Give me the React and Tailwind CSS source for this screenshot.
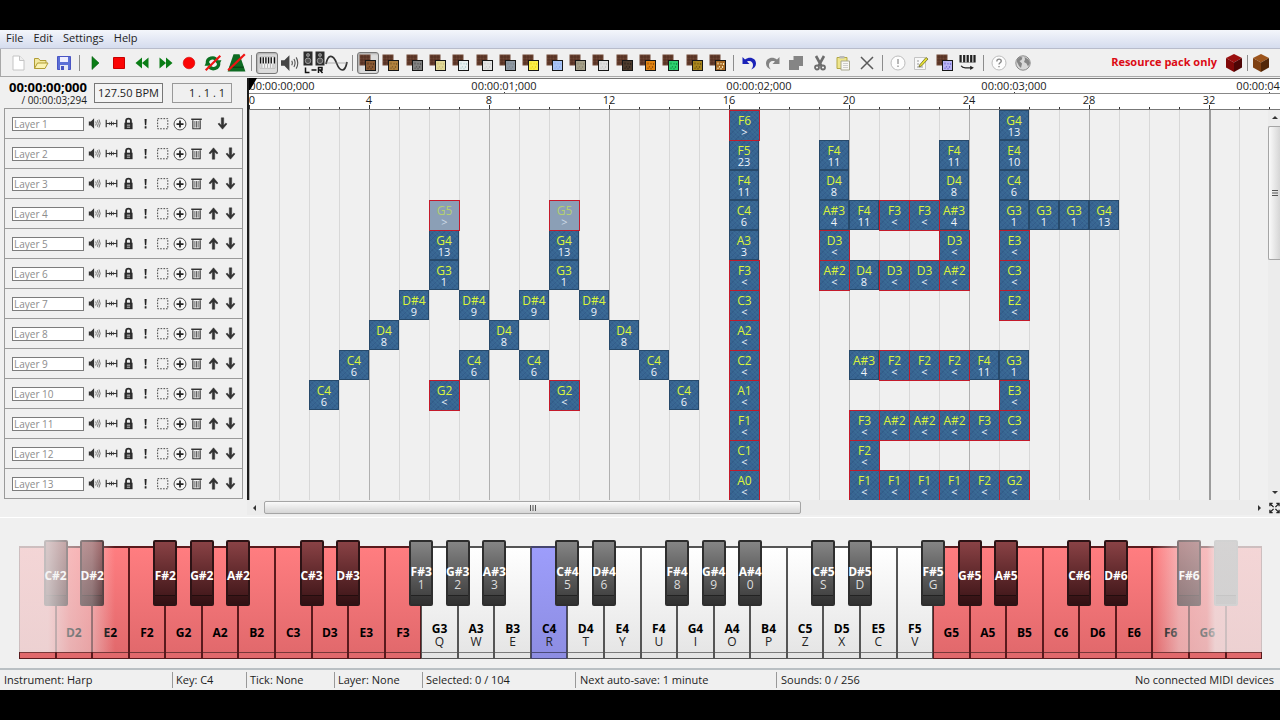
import React from "react";

/* ---------- data ---------- */

const SONG = [
  "16 F6 >|25 G4 13",
  "16 F5 23|19 F4 11|23 F4 11|25 E4 10",
  "16 F4 11|19 D4 8|23 D4 8|25 C4 6",
  "6 G5 > locked|10 G5 > locked|16 C4 6|19 A#3 4|20 F4 11|21 F3 <|22 F3 <|23 A#3 4|25 G3 1|26 G3 1|27 G3 1|28 G4 13",
  "6 G4 13|10 G4 13|16 A3 3|19 D3 <|23 D3 <|25 E3 <",
  "6 G3 1|10 G3 1|16 F3 <|19 A#2 <|20 D4 8|21 D3 <|22 D3 <|23 A#2 <|25 C3 <",
  "5 D#4 9|7 D#4 9|9 D#4 9|11 D#4 9|16 C3 <|25 E2 <",
  "4 D4 8|8 D4 8|12 D4 8|16 A2 <",
  "3 C4 6|7 C4 6|9 C4 6|13 C4 6|16 C2 <|20 A#3 4|21 F2 <|22 F2 <|23 F2 <|24 F4 11|25 G3 1",
  "2 C4 6|6 G2 <|10 G2 <|14 C4 6|16 A1 <|25 E3 <",
  "16 F1 <|20 F3 <|21 A#2 <|22 A#2 <|23 A#2 <|24 F3 <|25 C3 <",
  "16 C1 <|20 F2 <",
  "16 A0 <|20 F1 <|21 F1 <|22 F1 <|23 F1 <|24 F2 <|25 G2 <",
];

const NOTES = SONG.flatMap((row, layer) =>
  row.split("|").map((cell) => {
    const [tick, name, mark, locked] = cell.split(" ");
    return { tick: Number(tick), layer, name, mark, locked: Boolean(locked) };
  })
);

const TICKS = Array.from({ length: 35 }, (_, i) => i);
const TIMES = ["00:00:00;000", "00:00:01;000", "00:00:02;000", "00:00:03;000", "00:00:04;000"];

const LETTERS = ["C", "D", "E", "F", "G", "A", "B"];
const SHARPS = "CDFGA";
const WHITE_BINDS = "QWERTYUIOPZXCV";
const BLACK_BINDS = {
  "F#3": "1", "G#3": "2", "A#3": "3", "C#4": "5", "D#4": "6", "F#4": "8",
  "G#4": "9", "A#4": "0", "C#5": "S", "D#5": "D", "F#5": "G",
};
const KEYS = Array.from({ length: 34 }, (_, i) => {
  const letter = LETTERS[i % 7];
  const octave = 2 + Math.floor(i / 7);
  const sharp = i < 33 && SHARPS.includes(letter) ? letter + "#" + octave : null;
  return {
    name: letter + octave,
    bind: i >= 11 && i <= 24 ? WHITE_BINDS[i - 11] : null,
    sharp,
    sharpBind: sharp ? BLACK_BINDS[sharp] : null,
    edge: i === 0 || i === 33,
    edgeSharp: i === 32,
  };
});

/* ---------- icons ---------- */

const Svg = ({ size = 16, children, ...rest }) => (
  <svg width={size} height={size} viewBox="0 0 16 16" fill="none" className="shrink-0" aria-hidden="true" {...rest}>
    {children}
  </svg>
);

const NewIcon = () => (
  <Svg><path d="M3 1h6.5L14 5.5V15H3z" fill="#fff" stroke="#c4c4c4" /><path d="M9.5 1v4.5H14" stroke="#c4c4c4" fill="#eee" /></Svg>
);
const OpenIcon = () => (
  <Svg><path d="M1.5 13.5v-10h4l1.500 2h6v2.500" fill="#f3e9a0" stroke="#b09c35" /><path d="M1.500 13.500 4.500 8h10.500l-3 5.500z" fill="#fbf3b4" stroke="#b09c35" /></Svg>
);
const SaveIcon = () => (
  <Svg><path d="M1.500 1.500h13v13h-13z" fill="#5b6fd6" stroke="#4a55c4" /><path d="M4 2h8v5H4z" fill="#eef" /><path d="M4 10h8v5H4z" fill="#e6e8f4" /><path d="M5 11h3v4H5z" fill="#4653c0" /></Svg>
);
const PlayIcon = () => <Svg><path d="M5 1.500 12 8l-7 6.500z" fill="#0a7d16" stroke="#056010" strokeWidth=".6" /></Svg>;
const StopIcon = () => <Svg><path d="M2.500 2.500h11v11h-11z" fill="#fb0505" stroke="#c80000" /></Svg>;
const RewIcon = () => <Svg><path d="M8 2.500v11L1.500 8zM14.500 2.500v11L8 8z" fill="#0a7d16" /></Svg>;
const FwdIcon = () => <Svg><path d="M8 2.500v11L14.500 8zM1.500 2.500v11L8 8z" fill="#0a7d16" /></Svg>;
const RecIcon = () => <Svg><circle cx="8" cy="8" r="5.800" fill="#fb0505" stroke="#d00000" strokeWidth=".6" /></Svg>;
const LoopIcon = () => (
  <Svg size={18}>
    <path d="M3 8.500a4.500 4.500 0 0 1 8.500-2.500M13 8a4.500 4.500 0 0 1-8.500 2.500" stroke="#0a7020" strokeWidth="3" />
    <path d="M9 5.500h6.500L13 10.500zM7 10.500H.500L3 5.500z" fill="#0a7020" />
    <path d="M1.500 14.500 14.500 1.500" stroke="#f01414" strokeWidth="1.900" />
  </Svg>
);
const MetronomeIcon = () => (
  <Svg size={19}>
    <path d="M5.500 1h5l5 14.500H.5z" fill="#0d6b22" /><path d="M2 12h12" stroke="#084515" />
    <path d="M1 14.500 15 1" stroke="#f01414" strokeWidth="1.900" />
  </Svg>
);
const PianoIcon = () => (
  <Svg size={17}><path d="M1 2.500h14v11H1z" fill="#f4f4f4" stroke="#aaa" strokeWidth=".6" />
    <path d="M1.500 3v6M4 3v6M6.500 3v6M9 3v6M11.500 3v6M14.500 3v6" stroke="#111" strokeWidth="1.300" />
    <path d="M2.700 9v4M5.300 9v4M8 9v4M10.700 9v4M13.200 9v4" stroke="#888" strokeWidth=".6" /></Svg>
);
const SpeakerIcon = () => (
  <Svg size={18}><path d="M0 5.500h3l4.500-4.500v14L3 10.500H0z" fill="#444" /><path d="M9.500 6q1.200 2 0 4M11.500 4.500q2 3.500 0 7M13.500 3q2.800 5 0 10" stroke="#555" /></Svg>
);
const StereoIcon = () => (
  <svg width="22" height="23" viewBox="0 0 22 23" aria-hidden="true" className="shrink-0">
    {[0.5, 12.5].map((x) => (
      <g key={x}>
        <rect x={x} y="0.500" width="9" height="14" fill="#2c2c2c" />
        <circle cx={x + 4.5} cy="4" r="1.600" fill="#777" stroke="#bbb" strokeWidth=".5" />
        <circle cx={x + 4.5} cy="9.800" r="2.800" fill="#555" stroke="#bbb" strokeWidth=".7" />
      </g>
    ))}
    <path d="M2.500 16.500v5h4M8.500 19h5M15.500 22v-5.500h3.500v2.500h-3.500M17 19l2.500 3" stroke="#111" strokeWidth="1.500" fill="none" />
  </svg>
);
const SineIcon = () => (
  <svg width="23" height="18" viewBox="0 0 23 18" fill="none" aria-hidden="true" className="shrink-0">
    <path d="M1 10C3 0 8 0 11.500 9S20 19 22 8" stroke="#333" strokeWidth="1.700" /><path d="M1 9h21" stroke="#888" strokeWidth=".6" />
  </svg>
);

const INSTRUMENTS = [
  ["Harp", "#8b5a33", "#5c3a20"], ["Double bass", "#b0823f", "#84602a"], ["Bass drum", "#818181", "#5b5b5b"],
  ["Snare", "#e2d998", "#cdc27c"], ["Click", "#e8f2f2", "#bcd6d6"], ["Guitar", "#e4e4e4", "#cfcfcf"],
  ["Flute", "#8f99a3", "#7f8993"], ["Bell", "#fbf04a", "#f3dc20"], ["Chime", "#a9c4f6", "#93b2ee"],
  ["Xylophone", "#a5a08a", "#8f8a74"], ["Iron xylophone", "#e0e0e0", "#cacaca"], ["Cow bell", "#4c3a2c", "#2e231b"],
  ["Didgeridoo", "#e28413", "#9c5506"], ["Bit", "#2fd070", "#119c49"], ["Banjo", "#a8851d", "#755a10"], ["Pling", "#a86a24", "#f5e2b0"],
];

const BlockIcon = ({ front = "#8b5a33", grain = "#5c3a20" }) => (
  <svg width="18" height="18" viewBox="0 0 18 18" aria-hidden="true" className="shrink-0">
    <rect x=".5" y=".5" width="11" height="11" fill="#6e4635" />
    <path d="M1 3h10M1 6h10M1 9h6M3 1v10M6 1v10M9 1v6" stroke="#4b2a1d" strokeWidth=".7" />
    <rect x="6.500" y="6.500" width="10" height="10" fill={front} stroke="#161616" />
    <path d="M9 8.500v2M12 9v1.500M14.500 9v2M10.500 12v1.500M13.500 12v2M9 13.500v1.500M12 14v1.500" stroke={grain} strokeWidth="1.200" />
  </svg>
);

const UndoIcon = () => <Svg><path d="M1.500 2v7h7L6 6.500c3.500-1.500 6 .5 6 3.500 0 2-1 3.500-2 4.500 3-1 5-3 5-6C15 3.500 9 1 4 4.500z" fill="#1a22b8" /></Svg>;
const RedoIcon = () => <Svg><path d="M14.500 2v7h-7L10 6.500C6.500 5 4 7 4 10c0 2 1 3.500 2 4.500-3-1-5-3-5-6C1 3.500 7 1 12 4.500z" fill="#838383" /></Svg>;
const CopyIcon = () => <Svg><path d="M5.500 1H15v10h-4v4H1V5h4.500z" fill="#858585" /></Svg>;
const CutIcon = () => (
  <Svg><path d="M4 1l5.500 10M12 1 6.500 11" stroke="#6d6d6d" strokeWidth="2.600" /><circle cx="5" cy="12.500" r="2" stroke="#6d6d6d" strokeWidth="1.800" /><circle cx="11" cy="12.500" r="2" stroke="#6d6d6d" strokeWidth="1.800" /></Svg>
);
const PasteIcon = () => (
  <Svg><path d="M2 2.500h10v11H2z" fill="#eee58c" stroke="#b3a845" /><path d="M4.500 1h5v2.500h-5z" fill="#bbb" /><path d="M6 6h8.500v9H6z" fill="#f8f8f4" stroke="#a8a890" /><path d="M8 8.500h5M8 10.500h5M8 12.500h5" stroke="#bbb" strokeWidth=".7" /></Svg>
);
const CrossIcon = () => <Svg><path d="M2 2l12 12M14 2 2 14" stroke="#5a5a5a" strokeWidth="1.500" /></Svg>;
const InfoIcon = () => <Svg><circle cx="8" cy="8" r="7" fill="#fdfdfd" stroke="#bdbdbd" /><path d="M8 4v5M8 10.500v1.500" stroke="#999" strokeWidth="1.400" /></Svg>;
const EditIcon = () => (
  <Svg><path d="M1.500 2.500h11v12h-11z" fill="#f8f8f8" stroke="#c4c4c4" /><path d="M4 6h2M4 9h2M4 12h6" stroke="#999" /><path d="M6.500 10 13 2.500l2 1.500-6.500 7-2.500.8z" fill="#e7e238" stroke="#5c5a1a" strokeWidth=".7" /></Svg>
);
const KeyboardIcon = () => (
  <Svg size={17}><path d="M1.500 1v7M4.900 1v7M8.200 1v7M11.500 1v7M14.600 1v7" stroke="#222" strokeWidth="2.100" /><path d="M1 8h14" stroke="#888" strokeWidth=".6" /><path d="M2 11q1 2 4 2h6" stroke="#222" strokeWidth="1.200" /><path d="M10.500 11l3.500 2-3.500 2z" fill="#222" /></Svg>
);
const HelpIcon = () => <Svg><circle cx="8" cy="8" r="7" fill="#fdfdfd" stroke="#bdbdbd" /><path d="M5.800 6.500C5.800 3.500 10.300 3.500 10.300 6 10.300 7.800 8 7.800 8 9.500M8 11v1.300" stroke="#888" strokeWidth="1.300" /></Svg>;
const GlobeIcon = () => (
  <Svg><circle cx="8" cy="8" r="7.200" fill="#d8d8d8" stroke="#8a8a8a" /><path d="M2 4.500 5 1.800l2.500.7L6.500 5l-2 1 2.500 2.500-1 4.500L4 11 2 7zM9.500 2l4 2.500L15 8l-2 3.500-1.500-3L9 7l1-2.500z" fill="#858585" /></Svg>
);
const CubeIcon = ({ top, left, right }) => (
  <svg width="18" height="20" viewBox="0 0 18 20" aria-hidden="true" className="shrink-0">
    <path d="M9 1l8 4-8 4.500L1 5z" fill={top} /><path d="M1 5l8 4.500V19l-8-4.500z" fill={left} /><path d="M17 5 9 9.500V19l8-4.500z" fill={right} />
  </svg>
);

const VolIcon = () => <Svg size={13}><path d="M1 5.500h2.500L7.500 1.500v13l-4-4H1z" fill="#333" /><path d="M9.500 5.500q1.400 2.500 0 5M11.500 4q2.400 4 0 8M13.500 3q3 5 0 10" stroke="#666" strokeWidth="1.100" /></Svg>;
const PanIcon = () => <Svg size={13}><path d="M1.500 3.500v9M14.500 3.500v9M1.500 8h13M8 5.500v5" stroke="#333" strokeWidth="1.500" /><path d="M4 8l2-2v4zM12 8l-2-2v4z" fill="#333" /></Svg>;
const LockIcon = () => <Svg size={13}><path d="M3 7h10v8H3z" fill="#2b2b2b" /><path d="M5 8V4.500C5 1 11 1 11 4.500V8" stroke="#2b2b2b" strokeWidth="2.200" /><path d="M6 10h4M6 12.500h4" stroke="#ddd" strokeWidth="1.100" /></Svg>;
const SoloIcon = () => <Svg size={13}><path d="M6.800 2.500h2.600L8.900 10H7.300zM7 11.500h2.200V14H7z" fill="#222" /></Svg>;
const SelectIcon = () => <Svg size={13}><path d="M2 2h12.500v12.500H2z" stroke="#444" strokeDasharray="2 1.600" strokeWidth="1.200" /></Svg>;
const PlusIcon = () => <Svg size={14}><circle cx="8" cy="8" r="6.800" stroke="#444" strokeWidth="1.100" fill="#f6f6f6" /><path d="M8 4v8M4 8h8" stroke="#222" strokeWidth="2" /></Svg>;
const TrashIcon = () => <Svg size={13}><path d="M1.500 2.800h13" stroke="#333" strokeWidth="1.800" /><path d="M3.500 4v10.500h9V4" stroke="#333" strokeWidth="1.400" /><path d="M6 5v8M8 5v8M10 5v8" stroke="#444" /></Svg>;
const UpIcon = () => <Svg size={13}><path d="M8 1l5.500 6.500-1.200 1.200L9.500 6v9h-3V6L3.700 8.700 2.500 7.500z" fill="#333" stroke="#333" strokeWidth=".6" /></Svg>;
const DownIcon = () => <Svg size={13}><path d="M8 15l5.500-6.500-1.200-1.200L9.500 10V1h-3v9L3.700 7.300 2.500 8.500z" fill="#333" stroke="#333" strokeWidth=".6" /></Svg>;

/* ---------- toolbar ---------- */

const Tool = ({ label, active, children }) => (
  <button
    type="button"
    aria-label={label}
    className={
      "flex h-[22px] w-[22px] shrink-0 items-center justify-center " +
      (active ? "rounded-[3px] border border-[#777] bg-[#dcdcdc] shadow-[inset_1px_1px_2px_#aaa]" : "")
    }
  >
    {children}
  </button>
);
const Sep = ({ tight }) => <span className={"h-4 w-px shrink-0 bg-[#8c8c8c] " + (tight ? "mx-0.5" : "mx-1")} />;

function Toolbar() {
  return (
    <div className="flex h-[28px] items-center border-b border-l border-[#a8a8a8] bg-[#f0f0f0] pl-[6px] pr-2">
      <div className="flex w-[68px] shrink-0 justify-between">
        <Tool label="New song"><NewIcon /></Tool>
        <Tool label="Open song"><OpenIcon /></Tool>
        <Tool label="Save song"><SaveIcon /></Tool>
      </div>
      <Sep />
      <div className="flex w-[163px] shrink-0 justify-between">
        <Tool label="Play"><PlayIcon /></Tool>
        <Tool label="Stop"><StopIcon /></Tool>
        <Tool label="Rewind"><RewIcon /></Tool>
        <Tool label="Fast-forward"><FwdIcon /></Tool>
        <Tool label="Record"><RecIcon /></Tool>
        <Tool label="Loop"><LoopIcon /></Tool>
        <Tool label="Metronome"><MetronomeIcon /></Tool>
      </div>
      <Sep />
      <div className="flex w-[92px] shrink-0 items-center justify-between">
        <Tool label="Edit note keys" active><PianoIcon /></Tool>
        <Tool label="Edit note velocities"><SpeakerIcon /></Tool>
        <Tool label="Edit note panning"><StereoIcon /></Tool>
        <Tool label="Edit note pitches"><SineIcon /></Tool>
      </div>
      <Sep />
      <div className="flex w-[372px] shrink-0 justify-between">
        {INSTRUMENTS.map(([name, front, grain], i) => (
          <Tool key={name} label={name} active={i === 0}><BlockIcon front={front} grain={grain} /></Tool>
        ))}
      </div>
      <Sep />
      <div className="flex w-[140px] shrink-0 justify-between">
        <Tool label="Undo"><UndoIcon /></Tool>
        <Tool label="Redo"><RedoIcon /></Tool>
        <Tool label="Copy"><CopyIcon /></Tool>
        <Tool label="Cut"><CutIcon /></Tool>
        <Tool label="Paste"><PasteIcon /></Tool>
        <Tool label="Delete"><CrossIcon /></Tool>
      </div>
      <Sep />
      <div className="flex w-[92px] shrink-0 justify-between">
        <Tool label="Song info"><InfoIcon /></Tool>
        <Tool label="Song properties"><EditIcon /></Tool>
        <Tool label="Instrument settings"><BlockIcon front="#b9b4f4" grain="#7d76d6" /></Tool>
        <Tool label="MIDI devices"><KeyboardIcon /></Tool>
      </div>
      <Sep />
      <div className="flex w-[46px] shrink-0 justify-between">
        <Tool label="Help"><HelpIcon /></Tool>
        <Tool label="Website"><GlobeIcon /></Tool>
      </div>
      <div className="ml-auto flex shrink-0 items-center">
        <span className="mr-1.5 text-[11px] font-bold text-[#dc0a14]">Resource pack only</span>
        <Tool label="Data pack export"><CubeIcon top="#9c1010" left="#800808" right="#4e0505" /></Tool>
        <Sep tight />
        <Tool label="Schematic export"><CubeIcon top="#9c541c" left="#7f4012" right="#522708" /></Tool>
      </div>
    </div>
  );
}

/* ---------- layers ---------- */

const LayerButton = ({ label, children }) => (
  <button type="button" aria-label={label} className="flex h-4 w-[17px] shrink-0 items-center justify-center">{children}</button>
);

function Layers() {
  return (
    <ul className="ml-1 w-[239px] border-x border-t border-[#9a9a9a]">
      {SONG.map((_, i) => (
        <li key={i} className="flex h-[30px] items-center border-b border-[#9a9a9a] pl-[7px]">
          <input
            aria-label={"Name of layer " + (i + 1)}
            placeholder={"Layer " + (i + 1)}
            className="mr-0.5 h-[14px] w-[72px] border border-[#7c7c7c] bg-white px-px text-[10px] leading-[12px] placeholder:text-[#8c8c8c]"
          />
          <LayerButton label="Volume"><VolIcon /></LayerButton>
          <LayerButton label="Panning"><PanIcon /></LayerButton>
          <LayerButton label="Lock"><LockIcon /></LayerButton>
          <LayerButton label="Solo"><SoloIcon /></LayerButton>
          <LayerButton label="Select all"><SelectIcon /></LayerButton>
          <LayerButton label="Add layer"><PlusIcon /></LayerButton>
          <LayerButton label="Delete layer"><TrashIcon /></LayerButton>
          <span className="flex w-[34px] justify-center">
            {i > 0 && <LayerButton label="Move up"><UpIcon /></LayerButton>}
            <LayerButton label="Move down"><DownIcon /></LayerButton>
          </span>
        </li>
      ))}
    </ul>
  );
}

/* ---------- timeline and note grid ---------- */

const Grip = ({ vertical }) => (
  <svg width="8" height="8" viewBox="0 0 8 8" aria-hidden="true" className={vertical ? "rotate-90" : ""}>
    <path d="M1.500 1v6M4 1v6M6.500 1v6" stroke="#555" />
  </svg>
);

function Ruler() {
  return (
    <div className="h-8 overflow-hidden border-y border-[#777] bg-white text-[11px] leading-[13px]">
      <div className="flex h-[15px] border-b border-[#888]">
        {TIMES.map((t, i) => (
          <div key={t} className="flex w-[255px] shrink-0 flex-col justify-between">
            <span className={"w-[66px] text-center leading-[13px] whitespace-nowrap " + (i ? "-ml-[33px]" : "")}>{t}</span>
            <span className={"h-px w-px " + (i ? "bg-[#333]" : "")} />
          </div>
        ))}
      </div>
      <div className="flex h-[15px]">
        {TICKS.map((t) => (
          <div key={t} className="flex w-[30px] shrink-0 flex-col justify-between">
            <span className={"h-[11px] w-5 text-center leading-[11px] " + (t ? "-ml-[10px]" : "-ml-[7px]")}>{t % 4 ? "" : t}</span>
            <span className={t % 4 ? "h-0.5 w-px bg-[#333]" : "h-1 w-px bg-[#333]"} />
          </div>
        ))}
      </div>
    </div>
  );
}

function Note({ note }) {
  const outOfRange = note.mark === "<" || note.mark === ">";
  return (
    <div
      className={
        "flex flex-col items-center border pt-1 text-center " +
        (outOfRange ? "z-20 -mr-px -mb-px border-[#c41a2a] " : "z-10 border-[#27496a] ") +
        (note.locked
          ? "bg-[#8b9fb6]"
          : "bg-[#386492] bg-[repeating-linear-gradient(45deg,#3f7a9c55_0px,#3f7a9c55_1px,transparent_1px,transparent_3px),repeating-linear-gradient(-45deg,#29507b66_0px,#29507b66_1px,transparent_1px,transparent_4px)]")
      }
      style={{ gridColumn: note.tick + 1, gridRow: note.layer + 1 }}
    >
      <span className={"text-[12px] leading-[11px] " + (note.locked ? "text-[#b4d070]" : "text-[#dcf53a]")}>{note.name}</span>
      <span className={"text-[11px] leading-[11px] " + (note.locked ? "text-[#cfdbe8]" : "text-[#eef5fc]")}>{note.mark}</span>
    </div>
  );
}

function NoteGrid() {
  return (
    <div className="grid grid-cols-[repeat(35,30px)] grid-rows-[repeat(13,30px)] overflow-hidden bg-[#f0f0f0]">
      {TICKS.map((t) => (
        <div
          key={t}
          className={t === 32 ? "border-l-2 border-[#9c9c9c]" : t % 4 ? "border-l border-[#d8d8d8]" : "border-l border-[#b0b0b0]"}
          style={{ gridColumn: t + 1, gridRow: "1 / 14" }}
        />
      ))}
      {NOTES.map((n) => <Note key={n.tick + "-" + n.layer} note={n} />)}
    </div>
  );
}

function Workspace() {
  return (
    <main className="flex pt-px">
      <div className="w-[247px] shrink-0">
        <div className="flex h-[30px] items-center">
          <div className="w-[87px] text-right">
            <div className="text-[13px] leading-[14px] font-bold text-black">00:00:00;000</div>
            <div className="text-[10px] leading-[13px]">/ 00:00:03;294</div>
          </div>
          <button type="button" className="ml-[7px] h-5 w-[69px] border border-[#777] bg-[#f4f4f4] text-center text-[11px] leading-[18px] whitespace-nowrap">127.50 BPM</button>
          <div className="ml-[9px] h-5 w-[60px] border border-[#999] pr-1.5 text-right text-[11px] leading-[18px]">1 . 1 . 1</div>
        </div>
        <Layers />
      </div>
      <div className="min-w-0 flex-1">
        <div className="relative border-l-2 border-[#1c1c1c]">
          <svg width="9" height="12" viewBox="0 0 9 12" aria-hidden="true" className="absolute top-0 left-0 z-20"><path d="M0 0h8L1 12H0z" fill="#000" /></svg>
          <Ruler />
          <div className="flex">
            <div className="min-w-0 flex-1"><NoteGrid /></div>
            <div className="flex w-[12px] shrink-0 flex-col items-center bg-[#ececec]">
              <svg width="12" height="16" viewBox="0 0 12 16" aria-hidden="true"><path d="M4 9h6L7 6z" fill="#333" /></svg>
              <div className="flex h-[134px] w-full items-center justify-center rounded-l-[2px] border border-r-0 border-[#a5a5a5] bg-linear-to-r from-[#fafafa] to-[#d6d6d6]"><Grip vertical /></div>
              <svg width="12" height="16" viewBox="0 0 12 16" aria-hidden="true" className="mt-auto"><path d="M4 7h6L7 10z" fill="#333" /></svg>
            </div>
          </div>
        </div>
        <div className="flex h-[15px] items-center bg-[#ececec]">
          <svg width="17" height="14" viewBox="0 0 17 14" aria-hidden="true"><path d="M9 4v6L6 7z" fill="#333" /></svg>
          <div className="flex h-[13px] w-[52%] items-center justify-center rounded-[2px] border border-[#a5a5a5] bg-linear-to-b from-[#fafafa] to-[#d6d6d6]"><Grip /></div>
          <svg width="16" height="14" viewBox="0 0 16 14" aria-hidden="true" className="ml-auto"><path d="M7 4v6l3-3z" fill="#333" /></svg>
          <button type="button" aria-label="Full screen" className="ml-px flex h-[14px] w-[12px] items-center justify-center">
            <svg width="11" height="12" viewBox="0 0 12 12" aria-hidden="true"><path d="M1 4V1h3M8 1h3v3M11 8v3H8M4 11H1V8M1 1l4 4M11 1 7 5M11 11 7 7M1 11l4-4" stroke="#222" strokeWidth="1.400" fill="none" /></svg>
          </button>
        </div>
      </div>
    </main>
  );
}

/* ---------- piano ---------- */

function PianoKey({ k }) {
  const red = !k.bind;
  const selected = k.name === "C4";
  const face = selected
    ? "from-[#9d9dfb] to-[#8d8de2] border-[#45456e]"
    : red
      ? "from-[#ff7d80] to-[#e0686b] border-[#5a1a1d]"
      : "from-white to-[#e4e4e4] border-[#555]";
  return (
    <div className="relative min-w-0 flex-1">
      <button
        type="button"
        aria-label={k.name}
        className={"flex h-[113px] w-full flex-col justify-end border-x border-t-2 border-b bg-linear-to-b text-center text-[12px] " + face}
      >
        <span className={"flex w-full flex-col justify-end leading-[13px] " + (k.bind ? "pb-1" : "pb-[13px]")}>
          <b className="text-black">{k.edge ? "" : k.name}</b>
          {k.bind && <span className="text-[#222]">{k.bind}</span>}
        </span>
        <span className="h-[6px] w-full border-t border-[#00000077]" />
      </button>
      {k.sharp && (
        <button
          type="button"
          aria-label={k.sharp}
          className={
            "absolute -top-[6px] -right-[12px] z-10 flex h-[66px] w-6 flex-col items-center justify-end rounded-[2px] border-2 bg-linear-to-b text-[12px] text-white " +
            (k.edgeSharp
              ? "border-[#707070] from-[#7c7474] to-[#706a6a]"
              : k.sharpBind
                ? "border-[#2e2e2e] from-[#858585] to-[#3a3a3a]"
                : "border-[#2d1315] from-[#8a4245] to-[#3c1417]")
          }
        >
          <span className={"flex flex-col items-center leading-[13px] " + (k.sharpBind ? "pb-1" : "pb-[13px]")}>
            <b>{k.edgeSharp ? "" : k.sharp}</b>
            {k.sharpBind && <span className="text-[#ddd]">{k.sharpBind}</span>}
          </span>
          <span className="h-[9px] w-full shrink-0 border-t border-[#00000066] bg-[#00000026]" />
        </button>
      )}
    </div>
  );
}

function Piano() {
  return (
    <section className="relative mt-[2px] flex border-t border-white pt-[28px] pr-[18px] pb-[9px] pl-[19px]">
      {KEYS.map((k) => <PianoKey key={k.name} k={k} />)}
      <div className="pointer-events-none absolute inset-y-4 left-[18px] z-20 w-[97px] bg-[linear-gradient(to_right,#f0f0f0c4_0px,#f0f0f0c4_30px,#f0f0f088_52px,#f0f0f06c_74px,#f0f0f000_97px)]" />
      <div className="pointer-events-none absolute inset-y-4 right-[17px] z-20 w-[110px] bg-[linear-gradient(to_left,#f0f0f0c4_0px,#f0f0f0c4_48px,#f0f0f08c_56px,#f0f0f078_84px,#f0f0f000_110px)]" />
    </section>
  );
}

/* ---------- app ---------- */

export default function App() {
  return (
    <div className="min-h-screen bg-black py-[30px] font-['Open_Sans','Noto_Sans',sans-serif] text-[#1c1c1c]">
      <div className="overflow-hidden bg-[#f0f0f0]">
        <nav className="flex h-[18px] items-center gap-[10px] bg-linear-to-b from-[#f4f6fb] to-[#d5dcee] pb-0.5 pl-[6px] text-[11px] leading-[16px] text-[#222]">
          {["File", "Edit", "Settings", "Help"].map((m) => <button key={m} type="button">{m}</button>)}
        </nav>
        <div className="border-t border-[#b8bccb]"><Toolbar /></div>
        <Workspace />
        <Piano />
        <footer className="flex h-[22px] items-center border-t-2 border-[#b9bfc3] text-[11px] whitespace-nowrap">
          <span className="w-[172px] pl-1">Instrument: Harp</span>
          <span className="w-[74px] border-l border-[#999] pl-[3px]">Key: C4</span>
          <span className="w-[88px] border-l border-[#999] pl-[3px]">Tick: None</span>
          <span className="w-[88px] border-l border-[#999] pl-[3px]">Layer: None</span>
          <span className="w-[153px] border-l border-[#999] pl-[3px]">Selected: 0 / 104</span>
          <span className="w-[201px] border-l border-[#999] pl-[4px]">Next auto-save: 1 minute</span>
          <span className="border-l border-[#999] pl-[4px]">Sounds: 0 / 256</span>
          <span className="ml-auto pr-[6px]">No connected MIDI devices</span>
        </footer>
      </div>
    </div>
  );
}
